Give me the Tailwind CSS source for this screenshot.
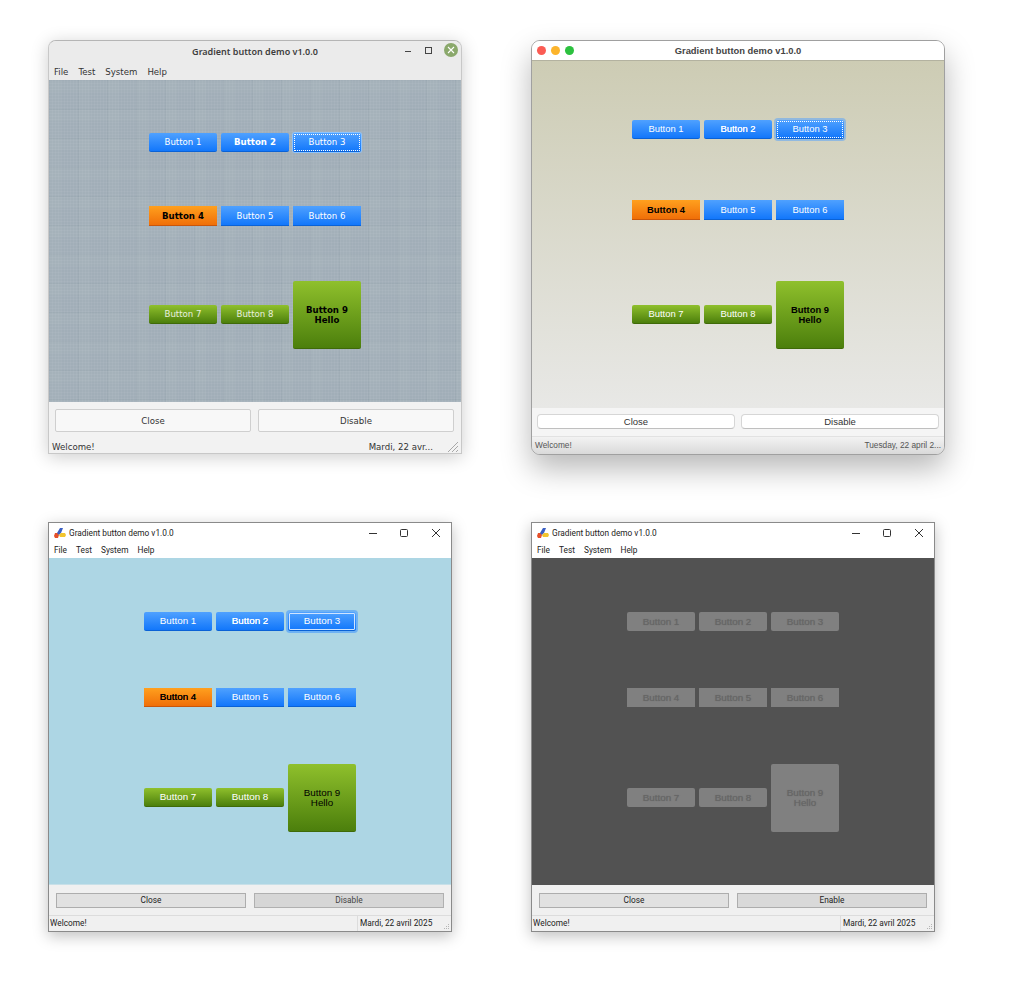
<!DOCTYPE html>
<html lang="en">
<head>
  <meta charset="UTF-8" />
  <title>Gradient button demo</title>
  <script src="https://cdn.jsdelivr.net/npm/@tailwindcss/browser@4"></script>
</head>
<body class="bg-white">
  <div class="relative w-[1024px] h-[989px] overflow-hidden">

    <!-- Linux -->
    <div class="absolute left-[48px] top-[40px] w-[414px] h-[414px] flex flex-col rounded-t-[8px] bg-[#f2f2f2] border border-[#c8c8c8] border-t-[#b5b5b5] shadow-[0_3px_18px_rgba(0,0,0,0.2)] overflow-hidden font-['DejaVu_Sans',sans-serif] text-[8.6px] text-[#333]">
      <div class="h-[21px] shrink-0 flex items-center justify-center relative bg-[#ebebeb]">
        <span class="font-['Noto_Sans',sans-serif] font-semibold text-[9px] text-[#3d3d3d]">Gradient button demo v1.0.0</span>
        <div class="absolute right-[3px] top-[2px] flex items-center">
          <span class="w-[6px] h-[1px] bg-[#444] mt-[3px] mr-[14px]"></span>
          <span class="w-[7px] h-[7px] border border-[#444] mr-[12px]"></span>
          <span class="w-[14px] h-[14px] rounded-full bg-[#8aa86b] flex items-center justify-center">
            <svg viewBox="0 0 8 8" class="w-[8px] h-[8px]" fill="none" stroke="#fff" stroke-width="1.1"><path d="M1 1l6 6M7 1l-6 6"/></svg>
          </span>
        </div>
      </div>
      <div class="h-[18px] shrink-0 flex items-center gap-[10px] pl-[5px] pt-[2px] bg-[#ebebeb]">
        <span>File</span><span>Test</span><span>System</span><span>Help</span>
      </div>
      <div data-grid="a" class="h-[322px] shrink-0 flex justify-center pt-[53px] bg-[#a1aeb8] bg-[linear-gradient(90deg,rgba(255,255,255,0.04)_1px,transparent_1px),linear-gradient(rgba(255,255,255,0.04)_1px,transparent_1px),linear-gradient(90deg,rgba(255,255,255,0.02)_12px,transparent_12px),linear-gradient(rgba(255,255,255,0.02)_12px,transparent_12px),linear-gradient(90deg,rgba(70,90,105,0.07)_1px,transparent_1px),linear-gradient(rgba(70,90,105,0.07)_1px,transparent_1px)] bg-[length:3px_3px,3px_3px,29px_29px,29px_29px,29px_29px,29px_29px]"></div>
      <div class="flex gap-[7px] px-[6px] pt-[7px] h-[36px] shrink-0">
        <button class="w-[196px] h-[23px] pt-[1px] bg-[#f8f8f8] border border-[#cfcfcf] rounded-[2px]">Close</button>
        <button class="w-[196px] h-[23px] pt-[1px] bg-[#f8f8f8] border border-[#cfcfcf] rounded-[2px]">Disable</button>
      </div>
      <div class="flex-1 relative flex items-center justify-between pl-[3px] pr-[28px] pt-[3px]">
        <span>Welcome!</span><span>Mardi, 22 avr...</span>
        <svg viewBox="0 0 12 12" class="absolute right-[2px] bottom-[1px] w-[12px] h-[12px]" stroke="#a8a8a8" fill="none"><path d="M1 11L11 1M5 11L11 5M9 11L11 9"/></svg>
      </div>
    </div>

    <!-- macOS -->
    <div class="absolute left-[531px] top-[40px] w-[414px] h-[415px] flex flex-col rounded-[9px] bg-[#f5f5f5] border border-[#a0a0a0] shadow-[0_14px_30px_rgba(0,0,0,0.28)] overflow-hidden font-['Liberation_Sans',sans-serif] text-[8.3px] text-[#333]">
      <div class="h-[20px] shrink-0 flex items-center justify-center relative pt-[1px] bg-white border-b border-[#b3b2a0]">
        <span class="font-bold text-[9.4px] text-[#444]">Gradient button demo v1.0.0</span>
        <div class="absolute left-[5px] top-[5px] flex gap-[5px]">
          <span class="w-[9px] h-[9px] rounded-full bg-[#fb5c54]"></span>
          <span class="w-[9px] h-[9px] rounded-full bg-[#fcb42c]"></span>
          <span class="w-[9px] h-[9px] rounded-full bg-[#2cc13f]"></span>
        </div>
      </div>
      <div data-grid="b" class="h-[347px] shrink-0 flex justify-center pt-[59px] bg-[linear-gradient(#cdccb4,#e8e8e6)]"></div>
      <div class="flex gap-[6px] px-[5px] pt-[6px] h-[29px] shrink-0 text-[9.5px] border-b border-[#e2e2e2]">
        <button class="w-[198px] h-[15px] bg-white border border-[#d6d6d6] border-b-[#bfbfbf] rounded-[4px]">Close</button>
        <button class="w-[198px] h-[15px] bg-white border border-[#d6d6d6] border-b-[#bfbfbf] rounded-[4px]">Disable</button>
      </div>
      <div class="flex-1 flex items-center justify-between px-[3px] bg-[linear-gradient(#f3f3f3,#d9d9d9)] text-[#555]">
        <span>Welcome!</span><span>Tuesday, 22 april 2...</span>
      </div>
    </div>

    <!-- Windows, enabled -->
    <div class="absolute left-[48px] top-[522px] w-[404px] h-[410px] flex flex-col bg-[#f0f0f0] border border-[#8a8a8a] shadow-[0_4px_14px_rgba(0,0,0,0.25)] font-['Roboto',sans-serif] text-[8.3px] text-[#222]">
      <div class="h-[19px] shrink-0 flex items-center relative bg-white pl-[5px] pt-[1px] gap-[3px]">
        <svg viewBox="0 0 12 10" class="w-[12px] h-[10px]"><path d="M0 8l1-3h3l1 2-1 3H1z" fill="#e5502a"/><path d="M3 5l3-5h3L7 5 5 7z" fill="#3a5fc4"/><path d="M7 5h4l1 2-1 2H6L5 7z" fill="#f2c52e"/></svg>
        <span>Gradient button demo v1.0.0</span>
        <svg viewBox="0 0 72 12" class="absolute right-[10px] top-[4px] w-[72px] h-[12px]" fill="none" stroke="#333"><path d="M0 6.5h8"/><rect x="31.5" y="2.5" width="7" height="7" rx="1"/><path d="M63 2l8 8M71 2l-8 8"/></svg>
      </div>
      <div class="h-[16px] shrink-0 flex items-center gap-[9px] pl-[5px] pt-[1px] bg-white">
        <span>File</span><span>Test</span><span>System</span><span>Help</span>
      </div>
      <div data-grid="c" class="h-[327px] shrink-0 flex justify-center pt-[54px] bg-[#add6e4] border-b border-[#c8e0e8]"></div>
      <div class="flex gap-[8px] px-[7px] pt-[8px] h-[31px] shrink-0 border-b border-[#dcdcdc]">
        <button class="w-[190px] h-[15px] bg-[#e1e1e1] border border-[#adadad]">Close</button>
        <button class="w-[190px] h-[15px] bg-[#d6d6d6] border border-[#b0b0b0] text-[#444]">Disable</button>
      </div>
      <div class="flex-1 relative flex items-center">
        <span class="pl-[1px] w-[308px]">Welcome!</span>
        <span class="pl-[2px] border-l border-[#dcdcdc] h-full flex items-center">Mardi, 22 avril 2025</span>
        <svg viewBox="0 0 6 6" class="absolute right-[1px] bottom-[1px] w-[6px] h-[6px]" fill="#b5b5b5"><path d="M4 0h1v1H4zM2 2h1v1H2zM4 2h1v1H4zM0 4h1v1H0zM2 4h1v1H2zM4 4h1v1H4z"/></svg>
      </div>
    </div>

    <!-- Windows, disabled -->
    <div class="absolute left-[531px] top-[522px] w-[404px] h-[410px] flex flex-col bg-[#f0f0f0] border border-[#8a8a8a] shadow-[0_4px_14px_rgba(0,0,0,0.25)] font-['Roboto',sans-serif] text-[8.3px] text-[#222]">
      <div class="h-[19px] shrink-0 flex items-center relative bg-white pl-[5px] pt-[1px] gap-[3px]">
        <svg viewBox="0 0 12 10" class="w-[12px] h-[10px]"><path d="M0 8l1-3h3l1 2-1 3H1z" fill="#e5502a"/><path d="M3 5l3-5h3L7 5 5 7z" fill="#3a5fc4"/><path d="M7 5h4l1 2-1 2H6L5 7z" fill="#f2c52e"/></svg>
        <span>Gradient button demo v1.0.0</span>
        <svg viewBox="0 0 72 12" class="absolute right-[10px] top-[4px] w-[72px] h-[12px]" fill="none" stroke="#333"><path d="M0 6.5h8"/><rect x="31.5" y="2.5" width="7" height="7" rx="1"/><path d="M63 2l8 8M71 2l-8 8"/></svg>
      </div>
      <div class="h-[16px] shrink-0 flex items-center gap-[9px] pl-[5px] pt-[1px] bg-white">
        <span>File</span><span>Test</span><span>System</span><span>Help</span>
      </div>
      <div data-grid="d" class="h-[327px] shrink-0 flex justify-center pt-[54px] bg-[#525252]"></div>
      <div class="flex gap-[8px] px-[7px] pt-[8px] h-[31px] shrink-0 border-b border-[#dcdcdc]">
        <button class="w-[190px] h-[15px] bg-[#e1e1e1] border border-[#adadad]">Close</button>
        <button class="w-[190px] h-[15px] bg-[#d9d9d9] border border-[#adadad]">Enable</button>
      </div>
      <div class="flex-1 relative flex items-center">
        <span class="pl-[1px] w-[308px]">Welcome!</span>
        <span class="pl-[2px] border-l border-[#dcdcdc] h-full flex items-center">Mardi, 22 avril 2025</span>
        <svg viewBox="0 0 6 6" class="absolute right-[1px] bottom-[1px] w-[6px] h-[6px]" fill="#b5b5b5"><path d="M4 0h1v1H4zM2 2h1v1H2zM4 2h1v1H4zM0 4h1v1H0zM2 4h1v1H2zM4 4h1v1H4z"/></svg>
      </div>
    </div>
  </div>

  <script>
    const base = "w-[68px] flex items-center justify-center text-center leading-[10px] ";
    const r = "rounded-[2px] ";
    const blue = "bg-[linear-gradient(#4fa1ff,#1277fb)] text-white border-b border-[#0a62d6] ";
    const orange = "bg-[linear-gradient(#ffa01e,#f06f08)] text-black border-b border-[#c9560a] ";
    const green = r + "bg-[linear-gradient(#8fc02c,#4c7f0c)] border-b border-[#3f6a08] ";
    const dis = "bg-[#808080] text-[#666] [text-shadow:0_0_1px_#666] ";
    const thick = "[text-shadow:0_0_0.6px_currentColor] ";

    // label, colour style
    const sets = {
      a: { font: "text-[8.6px] font-['DejaVu_Sans',sans-serif]", rows: ["h-[19px] ", "h-[20px] "], gaps: ["mb-[54px]", "mb-[55px]"], btns: [
        ["Button 1", r + blue], ["Button 2", r + blue + "font-bold"], ["Button 3", r + blue + "outline outline-1 outline-dotted outline-white -outline-offset-2 shadow-[0_0_0_1px_#8cc4ff]"],
        ["Button 4", orange + "font-bold"], ["Button 5", blue], ["Button 6", blue],
        ["Button 7", green + "text-white/85"], ["Button 8", green + "text-white/85"], ["Button 9<br>Hello", green + "text-black font-bold"]] },
      b: { font: "text-[9.4px] font-['Liberation_Sans',sans-serif]", rows: ["h-[19px] ", "h-[20px] "], gaps: ["mb-[61px]", "mb-[61px]"], btns: [
        ["Button 1", r + blue], ["Button 2", r + blue + thick], ["Button 3", r + blue + "outline outline-1 outline-dotted outline-white -outline-offset-2 shadow-[0_0_0_2px_rgba(80,160,255,0.5)]"],
        ["Button 4", orange + "font-bold"], ["Button 5", blue], ["Button 6", blue],
        ["Button 7", green + "text-white"], ["Button 8", green + "text-white"], ["Button 9<br>Hello", green + "text-black font-bold"]] },
      c: { font: "text-[9.8px] font-['Liberation_Sans',sans-serif]", rows: ["h-[19px] ", "h-[19px] "], gaps: ["mb-[57px]", "mb-[57px]"], btns: [
        ["Button 1", r + blue], ["Button 2", r + blue + thick], ["Button 3", r + blue + "outline outline-1 outline-[#cfe4ff] -outline-offset-2 shadow-[0_0_0_2px_rgba(60,150,255,0.55)]"],
        ["Button 4", orange + thick], ["Button 5", blue], ["Button 6", blue],
        ["Button 7", green + "text-white"], ["Button 8", green + "text-white"], ["Button 9<br>Hello", green + "text-black"]] },
      d: { font: "text-[9.8px] font-['Liberation_Sans',sans-serif]", rows: ["h-[19px] ", "h-[19px] "], gaps: ["mb-[57px]", "mb-[57px]"], btns: [
        ["Button 1", r + dis], ["Button 2", r + dis], ["Button 3", r + dis],
        ["Button 4", dis], ["Button 5", dis], ["Button 6", dis],
        ["Button 7", r + dis], ["Button 8", r + dis], ["Button 9<br>Hello", r + dis]] }
    };

    document.querySelectorAll("[data-grid]").forEach(el => {
      const s = sets[el.dataset.grid];
      let html = '<div class="' + s.font + '">';
      [0, 3, 6].forEach((start, row) => {
        html += '<div class="flex gap-[4px] ' + (row == 2 ? "items-center " : "") + (s.gaps[row] || "") + '">';
        s.btns.slice(start, start + 3).forEach((b, i) => {
          const h = row == 2 ? (i == 2 ? "h-[68px] " : "h-[19px] mb-[1px] ") : s.rows[row];
          html += '<div class="' + base + h + b[1] + '">' + b[0] + '</div>';
        });
        html += '</div>';
      });
      el.innerHTML = html + '</div>';
    });
  </script>
</body>
</html>
